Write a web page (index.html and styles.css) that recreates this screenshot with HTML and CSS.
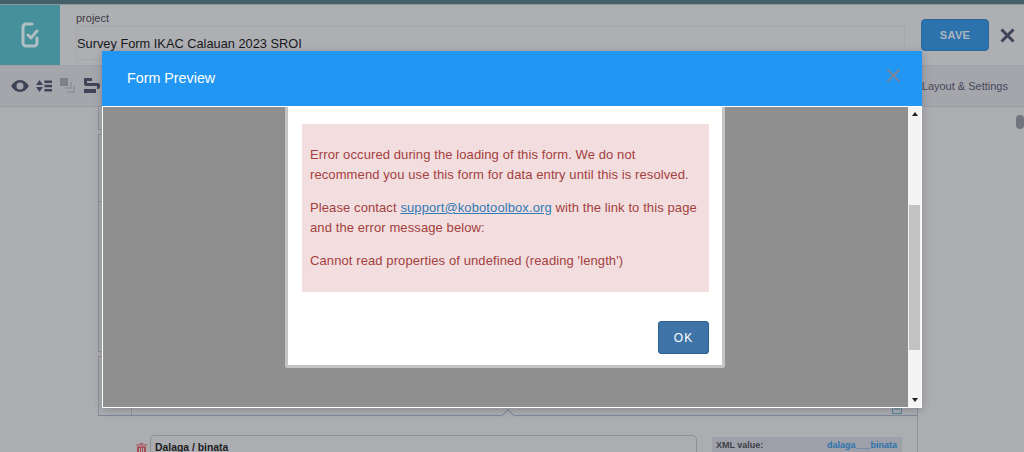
FILE: index.html
```html
<!DOCTYPE html>
<html lang="en">
<head>
<meta charset="utf-8">
<title>Form Preview</title>
<link rel="stylesheet" href="styles.css">
</head>
<body>
<div class="app">
  <div class="topline"></div>
  <header class="header">
    <div class="logo">
      <svg width="18" height="26" viewBox="0 0 18 26"><path class="logo-s" d="M11 2H5a3 3 0 0 0-3 3v16a3 3 0 0 0 3 3h8a3 3 0 0 0 3-3V16"/><path class="logo-s" d="M7 13l3 3 6-7"/></svg>
    </div>
    <div class="name">
      <div class="name-label">project</div>
      <div class="name-input">Survey Form IKAC Calauan 2023 SROI</div>
    </div>
    <button class="save">SAVE</button>
    <svg class="close" width="15" height="15" viewBox="0 0 15 15"><path d="M1.500 1.500l12 12M13.500 1.500l-12 12"/></svg>
  </header>
  <div class="toolbar">
    <svg class="tool" width="18" height="12" viewBox="0 0 18 12"><path fill-rule="evenodd" d="M9 0c4 0 7 3 9 6-2 3-5 6-9 6S2 9 0 6c2-3 5-6 9-6zm0 2.500a3.500 3.500 0 1 0 0 7 3.500 3.500 0 0 0 0-7z"/></svg>
    <svg class="tool" width="16" height="12" viewBox="0 0 16 12"><path d="M3.500 0L7 5H0zM3.500 12L0 7h7zM8.500 .5H16v2.500H8.500zM8.500 4.750H16v2.500H8.500zM8.500 9H16v2.500H8.500z"/></svg>
    <svg class="tool tool-copy" width="15" height="16" viewBox="0 0 15 16"><path class="copy-front" d="M0 0h8v8H0z"/><path class="copy-back" d="M10 4h2v7H5V9h5zM13 8h2v7H7v-2h6z"/></svg>
    <svg class="tool tool-split" width="16" height="16" viewBox="0 0 16 16"><path d="M0 0h8v3H3v2h11a2 2 0 0 1 2 2v2a2 2 0 0 1-2 2h-1V8H2a2 2 0 0 1-2-2zM0 11h12v4H0z"/></svg>
    <span class="layout-link">Layout &amp; Settings</span>
  </div>
  <main class="workspace">
    <div class="sheet">
      <div class="row-top">
        <div class="gutter">
          <div class="seg seg-a"></div>
          <div class="seg seg-b"></div>
          <div class="seg seg-c"></div>
          <div class="seg seg-d"></div>
        </div>
        <div class="row-seam"></div>
        <span class="notch"></span>
        <svg class="corner" width="10" height="8" viewBox="0 0 10 8"><path d="M.5.500h9v7h-9zM2 3h6"/></svg>
      </div>
      <div class="row-detail">
        <svg class="trash" width="11" height="12" viewBox="0 0 11 12"><path d="M0 1.500h11v1H0zM4 0h3v1H4zM1 3.500h9V12H1zM3 5v6h1V5zm2 0v6h1V5zm2 0v6h1V5z"/></svg>
        <div class="choice">Dalaga / binata</div>
        <div class="xml"><span class="xml-k">XML value:</span><span class="xml-v">dalaga___binata</span></div>
      </div>
    </div>
    <div class="thumb"></div>
  </main>
  <section class="modal">
    <div class="modal-head">
      <span class="modal-title">Form Preview</span>
      <svg class="modal-x" width="15" height="15" viewBox="0 0 15 15"><path d="M1.500 1.500l12 12M13.500 1.500l-12 12"/></svg>
    </div>
    <div class="frame">
      <div class="stage">
        <div class="dialog">
          <div class="alert">
            <p>Error occured during the loading of this form. We do not recommend you use this form for data entry until this is resolved.</p>
            <p>Please contact <a href="#">support@kobotoolbox.org</a> with the link to this page and the error message below:</p>
            <p>Cannot read properties of undefined (reading 'length')</p>
          </div>
          <div class="actions"><button class="ok">OK</button></div>
        </div>
      </div>
      <div class="scrollbar">
        <span class="arrow up"></span>
        <div class="track"><div class="sb-thumb"></div></div>
        <span class="arrow down"></span>
      </div>
    </div>
  </section>
</div>
</body>
</html>
```
FILE: styles.css
```css
* { box-sizing: border-box; }
html, body { margin: 0; height: 100%; overflow: hidden; }
body { font-family: "Liberation Sans", Arial, sans-serif; background: #acadb1; }
.app { position: relative; width: 1024px; height: 452px; overflow: hidden; display: flex; flex-direction: column; }
.topline { flex: none; height: 5px; background: #46606a; border-bottom: 1px solid #8c979c; }
.header { flex: none; height: 61px; display: flex; align-items: flex-start; background: #aeafb3; border-bottom: 1px solid #a0a1a6; }
.logo { flex: none; width: 60px; height: 60px; background: #45909a; display: flex; align-items: center; justify-content: center; }
.logo-s { fill: none; stroke: #afbfc3; stroke-width: 3; stroke-linecap: round; stroke-linejoin: round; }
.name { flex: none; width: 845px; padding: 6px 0 0 16px; }
.name-label { font-size: 11px; line-height: 14px; color: #3b3c42; }
.name-input { margin-top: 1px; height: 34px; border: 1px solid #a6a7ab; padding: 9px 0 0 0; font-size: 12.8px; line-height: 16px; color: #17181c; }
.save { flex: none; margin: 14px 0 0 16px; width: 68px; height: 32px; border: 1px solid #2a699f; border-radius: 4px; background: #2c72ac; color: #afb5bc; font: 700 11px "Liberation Sans", Arial, sans-serif; letter-spacing: .3px; }
.close { flex: none; margin: 23px 0 0 11px; fill: none; stroke: #3f4459; stroke-width: 3; }
.toolbar { flex: none; height: 41px; display: flex; align-items: center; gap: 7px; padding: 0 16px 0 11px; background: #a5a6ac; border-bottom: 1px solid #9b9ca2; }
.tool { fill: #3f4459; flex: none; }
.tool-copy { margin-left: 1px; }
.tool-split { margin-left: 2px; }
.copy-front { fill: #7f8087; }
.copy-back { fill: #94959b; }
.layout-link { margin-left: auto; font-size: 11px; color: #45475a; }
.workspace { flex: 1; min-height: 0; position: relative; padding-left: 98px; }
.sheet { width: 820px; display: flex; flex-direction: column; border-right: 1px solid #8f9299; }
.row-top { flex: none; height: 309px; border-bottom: 1px solid #7e8798; position: relative; }
.gutter { position: absolute; inset: 0 auto 0 0; width: 4px; display: flex; flex-direction: column; }
.seg { border-left: 1px solid #8f9299; }
.seg-a { height: 23px; border-bottom: 1px solid #8f9299; }
.seg-b { height: 68px; margin-top: 4px; border-top: 1px solid #8f9299; border-bottom: 1px solid #8f9299; }
.seg-c { height: 150px; border-bottom: 1px solid #8f9299; }
.seg-d { flex: 1; margin-top: 4px; border-top: 1px solid #8f9299; }
.row-seam { position: absolute; left: 33px; top: 296px; bottom: 0; border-left: 1px solid #8f9299; }
.notch { position: absolute; left: 405px; bottom: -6px; width: 10px; height: 10px; background: #acadb1; border-top: 1px solid #7e8798; border-left: 1px solid #7e8798; transform: rotate(45deg); }
.corner { position: absolute; right: 15px; bottom: 1px; fill: none; stroke: #4a8096; }
.row-detail { display: flex; align-items: flex-start; padding: 19px 0 0 38px; }
.trash { fill: #a94a55; margin-top: 8px; flex: none; }
.choice { flex: none; margin-left: 3px; width: 547px; height: 40px; border: 1px solid #8f9095; border-radius: 4px; padding: 6px 4px; font-size: 10.4px; font-weight: 700; color: #1c1c22; }
.xml { flex: none; width: 190px; margin-left: 15px; height: 24px; margin-top: 2px; background: #9ea0a9; display: flex; justify-content: space-between; padding: 3px 5px 0 4px; font-size: 9px; font-weight: 700; }
.xml-k { color: #3d3f4a; }
.xml-v { color: #2c72ac; }
.thumb { position: absolute; right: 0; top: 8px; width: 8px; height: 14px; border-radius: 4px; background: #71757f; }
.modal { position: absolute; left: 102px; top: 51px; width: 820px; height: 357px; display: flex; flex-direction: column; box-shadow: 0 2px 8px rgba(60,60,70,.3); }
.modal-head { flex: none; height: 55px; background: #2196f3; display: flex; align-items: center; justify-content: space-between; padding: 0 21px 0 25px; }
.modal-title { color: #fff; font-size: 14.3px; margin-bottom: 2px; }
.modal-x { fill: none; stroke: #79859c; stroke-width: 2; margin-bottom: 6px; }
.frame { flex: 1; min-height: 0; display: flex; background: #fff; padding: 1px; }
.stage { flex: 1; background: #8f8f8f; display: flex; justify-content: center; align-items: flex-start; overflow: hidden; padding-right: 1px; }
.dialog { flex: none; width: 440px; height: 262px; margin-top: -1px; background: #fff; border: 3px solid #c4c4c4; border-top: 0; border-radius: 0 0 3px 3px; padding: 18px 13px 0 14px; display: flex; flex-direction: column; }
.alert { flex: none; height: 168px; background: #f2dede; color: #a4403f; padding: 12px 8px; font-size: 13px; line-height: 20px; letter-spacing: .1px; }
.alert p { margin: 9px 0 13px; }
.alert a { color: #337ab7; text-decoration: underline; }
.actions { display: flex; justify-content: flex-end; padding-top: 29px; }
.ok { width: 51px; height: 33px; background: #3f74a8; border: 1px solid #2e5f8f; border-radius: 3px; color: #fff; font: 12px "Liberation Sans", Arial, sans-serif; letter-spacing: 1px; }
.scrollbar { flex: none; width: 13px; display: flex; flex-direction: column; align-items: center; background: #f4f4f4; }
.track { flex: 1; width: 100%; padding: 85px 1px 44px; margin: 4px 0; }
.sb-thumb { height: 100%; background: #c2c2c2; }
.arrow { width: 0; height: 0; border-left: 3px solid transparent; border-right: 3px solid transparent; flex: none; }
.arrow.up { border-bottom: 4px solid #222; margin-top: 5px; }
.arrow.down { border-top: 4px solid #222; margin-bottom: 5px; }
```
